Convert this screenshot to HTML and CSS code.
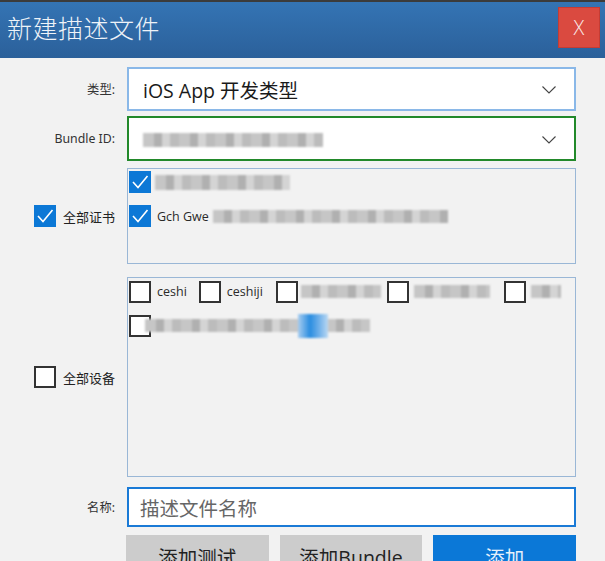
FILE: index.html
```html
<!DOCTYPE html>
<html lang="zh">
<head>
<meta charset="utf-8">
<link rel="stylesheet" href="styles.css">
</head>
<body>
<div class="titlebar">
  <span class="title">新建描述文件</span>
  <span class="close">X</span>
</div>
<div class="form">
  <div class="row r-type">
    <div class="label">类型:</div>
    <div class="combo combo-blue">
      <span class="combo-text">iOS App 开发类型</span>
      <svg class="chev" width="14" height="8" viewBox="0 0 14 8"><path d="M0.5 0.5 L7 7 L13.5 0.5" fill="none" stroke="#444" stroke-width="1.1"/></svg>
    </div>
  </div>
  <div class="row r-bundle">
    <div class="label">Bundle ID:</div>
    <div class="combo combo-green">
      <span class="blur blur-bundle"></span>
      <svg class="chev" width="14" height="8" viewBox="0 0 14 8"><path d="M0.5 0.5 L7 7 L13.5 0.5" fill="none" stroke="#444" stroke-width="1.1"/></svg>
    </div>
  </div>
  <div class="row r-cert">
    <div class="label label-check">
      <span class="cb checked"><svg width="22" height="22" viewBox="0 0 22 22"><path d="M4 11 L9 16.5 L18.5 5" fill="none" stroke="#fff" stroke-width="1.6"/></svg></span>
      <span class="cb-text">全部证书</span>
    </div>
    <div class="list list-cert">
      <div class="item">
        <span class="cb checked"><svg width="22" height="22" viewBox="0 0 22 22"><path d="M4 11 L9 16.5 L18.5 5" fill="none" stroke="#fff" stroke-width="1.6"/></svg></span>
        <span class="blur blur-c1"></span>
      </div>
      <div class="item item2">
        <span class="cb checked"><svg width="22" height="22" viewBox="0 0 22 22"><path d="M4 11 L9 16.5 L18.5 5" fill="none" stroke="#fff" stroke-width="1.6"/></svg></span>
        <span class="item-text">Gch Gwe</span>
        <span class="blur blur-c2"></span>
      </div>
    </div>
  </div>
  <div class="row r-dev">
    <div class="label label-check">
      <span class="cb"></span>
      <span class="cb-text">全部设备</span>
    </div>
    <div class="list list-dev">
      <div class="dev-row">
        <span class="cb"></span><span class="item-text t-ceshi">ceshi</span>
        <span class="cb"></span><span class="item-text t-ceshiji">ceshiji</span>
        <span class="cb"></span><span class="blur blur-d1"></span>
        <span class="cb"></span><span class="blur blur-d2"></span>
        <span class="cb"></span><span class="blur blur-d3"></span>
      </div>
      <div class="dev-row dev-row2">
        <span class="cb"></span><span class="blur blur-d4"></span>
        <span class="blur-blue"></span>
      </div>
    </div>
  </div>
  <div class="row r-name">
    <div class="label">名称:</div>
    <div class="input">描述文件名称</div>
  </div>
  <div class="row r-btns">
    <div class="label"></div>
    <div class="btns">
      <div class="btn gray">添加测试</div>
      <div class="btn gray">添加Bundle</div>
      <div class="btn blue">添加</div>
    </div>
  </div>
</div>
</body>
</html>
```
FILE: styles.css
```css
html, body {
  margin: 0;
  padding: 0;
  background: #f2f2f2;
  height: 561px;
  overflow: hidden;
  font-family: "Noto Sans", "Noto Sans CJK SC", sans-serif;
}
.titlebar {
  height: 56px;
  border-top: 2px solid #3b3b3b;
  background: linear-gradient(#3474b4, #2b609a);
  display: flex;
  align-items: center;
  justify-content: space-between;
  padding: 0 5px 0 7px;
}
.title {
  color: #eef3f8;
  font-family: "Noto Sans CJK SC", sans-serif;
  font-size: 25px;
  font-weight: 300;
  letter-spacing: 0.5px;
  margin-top: -6px;
}
.close {
  width: 40px;
  height: 39px;
  margin-top: -6px;
  background: #da4a40;
  border: 1px solid #c53c34;
  color: #fbe9e7;
  font-family: "Open Sans", sans-serif;
  font-weight: 300;
  font-size: 20px;
  display: flex;
  align-items: center;
  justify-content: center;
}
.form {
  display: flex;
  flex-direction: column;
  padding: 9px 29px 0 0;
}
.row {
  display: flex;
  align-items: center;
}
.label {
  width: 127px;
  flex: none;
  box-sizing: border-box;
  padding-right: 12px;
  text-align: right;
  font-size: 12.3px;
  color: #333;
  font-family: "Noto Sans", "Noto Sans CJK SC", sans-serif;
}
.combo {
  flex: 1;
  box-sizing: border-box;
  background: #fff;
  display: flex;
  align-items: center;
  justify-content: space-between;
  padding: 0 18px 0 14px;
}
.combo-blue {
  height: 44px;
  border: 2px solid #8ab8e8;
}
.combo-green {
  height: 45px;
  border: 2px solid #22892a;
}
.r-bundle { margin-top: 5px; }
.combo-text {
  font-family: "Open Sans", "Noto Sans CJK SC", sans-serif;
  font-size: 19.5px;
  color: #1a1a1a;
}
.chev { margin-top: 2px; }
.blur {
  display: inline-block;
  height: 13px;
  filter: blur(1.2px);
  background: repeating-linear-gradient(90deg, #c6c6c6 0 11px, #b0b0b0 11px 19px, #d4d4d4 19px 27px, #bcbcbc 27px 36px);
}
.blur-bundle { width: 180px; height: 14px; margin-top: 2px; }
.r-cert { margin-top: 7px; }
.list {
  flex: 1;
  box-sizing: border-box;
  border: 1px solid #9ab7d6;
  background: #f2f2f2;
  align-self: stretch;
}
.list-cert {
  height: 96px;
  padding: 1px 0 0 1px;
}
.item {
  display: flex;
  align-items: center;
  height: 24px;
}
.item2 { margin-top: 10px; }
.cb {
  flex: none;
  box-sizing: border-box;
  width: 22px;
  height: 22px;
  border: 2px solid #333;
  background: #fff;
  display: inline-flex;
  align-items: center;
  justify-content: center;
}
.cb.checked {
  border: none;
  background: #0c78d6;
}
.label-check {
  display: flex;
  align-items: center;
  justify-content: flex-end;
  gap: 7px;
}
.cb-text {
  font-family: "Noto Sans CJK SC", sans-serif;
  font-size: 13px;
  color: #222;
}
.item-text {
  font-family: "Open Sans", sans-serif;
  font-size: 12.5px;
  color: #2a2a2a;
  margin-left: 6px;
}
.blur-c1 { width: 135px; height: 15px; margin-left: 4px; }
.blur-c2 { width: 235px; margin-left: 4px; }
.r-dev { margin-top: 13px; }
.list-dev {
  height: 200px;
  padding: 2px 0 0 1px;
}
.dev-row {
  display: flex;
  align-items: center;
  height: 23px;
}
.dev-row2 { margin-top: 11px; }
.t-ceshi { margin-right: 12px; }
.t-ceshiji { margin-right: 13px; }
.blur-d1 { width: 80px; margin: 0 6px 0 3px; }
.blur-d2 { width: 76px; margin: 0 14px 0 5px; }
.blur-d3 { width: 30px; margin-left: 5px; }
.blur-d4 { width: 225px; margin-left: -6px; }
.blur-blue {
  width: 30px;
  height: 24px;
  margin-left: -72px;
  background: linear-gradient(90deg, #a8cdf0, #2a8de0 40%, #6fb0ea 70%, #b9d8f3);
  filter: blur(0.8px);
}
.r-name { margin-top: 10px; }
.input {
  flex: 1;
  box-sizing: border-box;
  height: 40px;
  border: 2px solid #1a7ad6;
  background: #fff;
  padding-left: 11px;
  display: flex;
  align-items: center;
  font-family: "Noto Sans CJK SC", sans-serif;
  font-size: 19.5px;
  color: #666;
}
.r-btns { margin-top: 8px; align-items: flex-start; }
.btns {
  flex: 1;
  display: flex;
  gap: 11px;
  margin-left: -1px;
}
.btn {
  flex: 1;
  height: 40px;
  display: flex;
  justify-content: center;
  padding-top: 7px;
  box-sizing: border-box;
  font-family: "Open Sans", "Noto Sans CJK SC", sans-serif;
  font-size: 19.5px;
}
.btn.gray { background: #cccccc; color: #222; }
.btn.blue { background: #0b78d7; color: #e6f1fb; }
```
